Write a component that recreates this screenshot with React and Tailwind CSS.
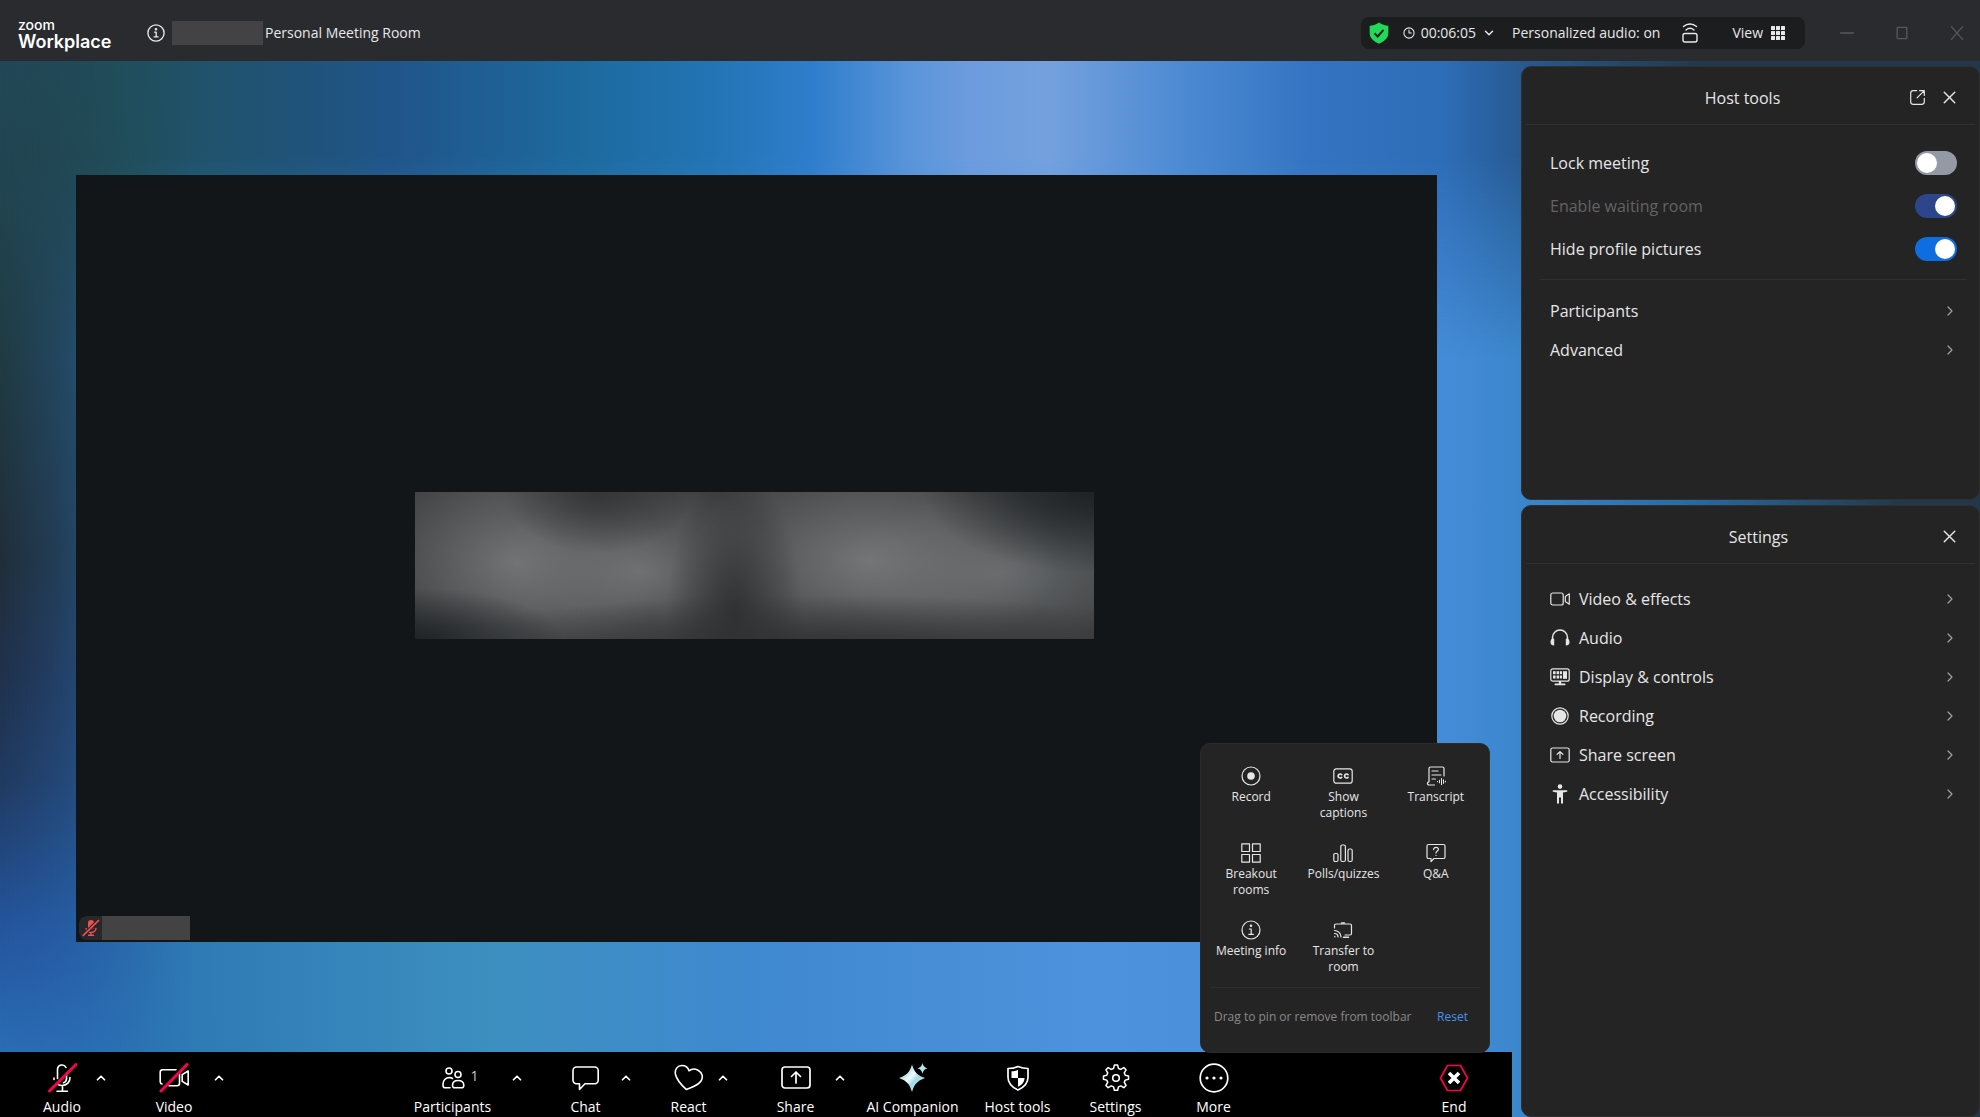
import { useState } from "react";
import { ChevronDown, ChevronRight, ChevronUp, X } from "lucide-react";

/* ---------- icons ---------- */

function Svg({ size = 20, box = 20, className = "", children, sw = 1.2 }) {
  return (
    <svg
      width={size}
      height={size}
      viewBox={`0 0 ${box} ${box}`}
      fill="none"
      stroke="currentColor"
      strokeWidth={sw}
      strokeLinecap="round"
      strokeLinejoin="round"
      aria-hidden="true"
      className={`shrink-0 ${className}`}
    >
      {children}
    </svg>
  );
}

const InfoIcon = ({ size = 18, sw = 1.5 }) => (
  <Svg size={size} sw={sw}>
    <circle cx="10" cy="10" r="9" />
    <circle cx="10" cy="5.8" r="0.7" fill="currentColor" />
    <path d="M8.3 9h1.9v5.2M7.8 14.3h4.6" />
  </Svg>
);

const ShieldCheck = () => (
  <svg width="20" height="22" viewBox="0 0 20 22" aria-hidden="true" className="shrink-0">
    <path d="M10 .5c2.6 2 5.6 3 9.3 3.2V11c0 4.8-3.7 8.5-9.3 10.700C4.400 19.500.7 15.800.7 11V3.700C4.400 3.500 7.400 2.500 10 .5z" fill="#23d959" />
    <path d="M5.500 11.300l3.200 3.200 5.800-6.600" fill="none" stroke="#1c1d1f" strokeWidth="2" />
  </svg>
);

const ClockIcon = () => (
  <Svg size={12} sw={1.8}>
    <circle cx="10" cy="10" r="8.500" />
    <path d="M10 5v5h4" />
  </Svg>
);

const CastIcon = () => (
  <Svg size={20} sw={1.4}>
    <rect x="3" y="10.500" width="14" height="8.500" rx="2" />
    <path d="M3.500 3.600c3.800-3.400 9.200-3.400 13 0M6 7c2.400-2 5.600-2 8 0" />
  </Svg>
);

const GridIcon = () => (
  <svg width="14" height="14" viewBox="0 0 14 14" fill="currentColor" aria-hidden="true" className="shrink-0">
    {[0, 5, 10].map((y) => [0, 5, 10].map((x) => <rect key={`${x}-${y}`} x={x} y={y} width="4" height="4" rx="0.5" />))}
  </svg>
);

const PopOutIcon = () => (
  <Svg size={17} sw={1.4}>
    <path d="M9 2H5a3 3 0 0 0-3 3v10a3 3 0 0 0 3 3h10a3 3 0 0 0 3-3v-4M12.500 2H18v5.500M18 2l-8.500 8.500" />
  </Svg>
);

const VideoSmall = () => (
  <Svg>
    <rect x=".8" y="4" width="12.400" height="12" rx="2" />
    <path d="M19.300 4.800v10.400l-4-2.600V7.400z" />
  </Svg>
);

const HeadphonesIcon = () => (
  <Svg>
    <path d="M2.500 13V9.500a7.500 7.500 0 0 1 15 0V13" strokeWidth="1.500" />
    <path d="M2.800 10.500c-1.600.4-2.300 2-2.300 3.600 0 2 .9 3.400 3.700 3.400v-6.200c0-.6-.6-1-1.400-.8zM17.200 10.500c1.600.4 2.300 2 2.300 3.600 0 2-.9 3.400-3.700 3.400v-6.200c0-.6.600-1 1.400-.8z" fill="currentColor" stroke="none" />
  </Svg>
);

const DisplayIcon = () => (
  <Svg>
    <rect x=".8" y="1.800" width="18.400" height="12.400" rx="2" />
    <g fill="currentColor" stroke="none">
      <rect x="3" y="4.200" width="2.600" height="3" />
      <rect x="6.600" y="4.200" width="2.600" height="3" />
      <rect x="10" y="4.200" width="2" height="3" />
      <rect x="3" y="8.500" width="2.600" height="3" />
      <rect x="6.600" y="8.500" width="2.600" height="3" />
      <rect x="10" y="8.500" width="2" height="3" />
      <rect x="13" y="4.200" width="4" height="7.600" />
      <rect x="8.800" y="14" width="2.400" height="3" />
      <rect x="4.500" y="16.500" width="11" height="1.700" rx=".8" />
    </g>
  </Svg>
);

const RecordingIcon = () => (
  <Svg>
    <circle cx="10" cy="10" r="8.200" />
    <circle cx="10" cy="10" r="6.300" fill="currentColor" stroke="none" />
  </Svg>
);

const ShareSmall = () => (
  <Svg>
    <rect x=".8" y="3" width="18.400" height="14" rx="1.800" />
    <path d="M10 13.500V7M7.200 9.300L10 6.600l2.800 2.700" />
  </Svg>
);

const AccessIcon = () => (
  <Svg>
    <g fill="currentColor" stroke="none">
      <circle cx="10" cy="2.600" r="2.300" />
      <path d="M2.800 6.200h14.400v1.500l-4.200.9v10.900h-2v-6h-2v6H7V8.600l-4.200-.9z" />
    </g>
  </Svg>
);

const RecordIcon = () => (
  <Svg>
    <circle cx="10" cy="10" r="9" />
    <circle cx="10" cy="10" r="3.800" fill="currentColor" stroke="none" />
  </Svg>
);

const CaptionIcon = () => (
  <Svg>
    <rect x=".8" y="2.800" width="18.400" height="14.400" rx="2.500" />
    <path d="M8.600 8.600a2 2 0 1 0 0 2.800M15 8.600a2 2 0 1 0 0 2.800" strokeWidth="1.700" />
  </Svg>
);

const TranscriptIcon = () => (
  <Svg>
    <path d="M8.500 19H3a1.700 1.700 0 0 1-1.500-2c.2-.9 1-1.200 1.500-1.200V2.500A1.500 1.500 0 0 1 4.500 1h12A1.500 1.500 0 0 1 18 2.500V10M6 5h6M6 9h9M6 13h3.500" />
    <path d="M11.500 15.400v.4M13.500 14.300v2.600M15.500 12.500v6.200M17.500 13.800v3.600M19.400 15.200v.8" strokeWidth="1" />
  </Svg>
);

const BreakoutIcon = () => (
  <Svg sw={1.2}>
    <path d="M.8.8h7.700v7.700H.8zM11.500.8h7.700v7.700h-7.700zM.8 11.500h7.700v7.700H.8zM11.500 11.500h7.700v7.700h-7.700z" />
  </Svg>
);

const PollsIcon = () => (
  <Svg>
    <rect x=".8" y="10.500" width="4.200" height="8" rx="1.200" />
    <rect x="7.800" y="2" width="4.600" height="16.500" rx="1.500" />
    <rect x="15" y="6" width="4.200" height="12.500" rx="1.500" />
  </Svg>
);

const QaIcon = () => (
  <Svg>
    <path d="M2.500 1.500h15A1.500 1.500 0 0 1 19 3v11a1.500 1.500 0 0 1-1.500 1.500H8L5 18.600v-3.100H2.500A1.500 1.500 0 0 1 1 14V3a1.500 1.500 0 0 1 1.500-1.500z" />
    <path d="M7.600 6.600C7.600 5.200 8.600 4.400 10 4.400s2.400.8 2.400 2c0 1.700-2.400 1.700-2.400 3.700M10 12.400v.1" />
  </Svg>
);

const TransferIcon = () => (
  <Svg>
    <path d="M1.500 8V5.500A1.500 1.500 0 0 1 3 4h14a1.500 1.500 0 0 1 1.500 1.500v8A1.500 1.500 0 0 1 17 15h-5" />
    <path d="M8.500 3h3M10.500 17.300h5" strokeWidth="1.500" />
    <path d="M1.500 10.500a6.500 6.500 0 0 1 6.500 6.500M1.500 13.500a3.500 3.500 0 0 1 3.500 3.500M1.700 16.500l.3.300" />
  </Svg>
);

/* toolbar icons share a 30px box */

const MicOff = () => (
  <Svg size={30} box={30} sw={1.6}>
    <path d="M10.500 15.500V6a4.500 4.500 0 0 1 8.500-1.500M19.500 10v5.500a4.500 4.500 0 0 1-3 4.300" />
    <path d="M7 15v1.500M23 14.500c.2 4.500-3.200 8-8 8-1.500 0-2.800-.3-4-.9M15.500 22.500V28M10 28.300h10.500" />
    <path d="M2.500 28L29 1.500" stroke="#fb0050" strokeWidth="3" />
  </Svg>
);

const VideoOff = () => (
  <Svg size={30} box={30} sw={1.6}>
    <path d="M3 21c-1.200-.3-1.800-1-1.800-2.300V9.300C1.200 7.600 2 6.800 3.700 6.800H17M20.500 10.500v9.800c0 1.700-.8 2.500-2.500 2.500h-8M29.200 8v14l-6-3.600v-6.800z" />
    <path d="M2 28L28 1.500" stroke="#fb0050" strokeWidth="3" />
  </Svg>
);

const PeopleIcon = () => (
  <Svg size={24} box={24} sw={1.6}>
    <circle cx="8" cy="5" r="3" />
    <circle cx="17" cy="8.500" r="3" />
    <path d="M11.500 12.500A6 6 0 0 0 8.500 11.500c-4 0-6.500 3-6.500 6.500v1.500c0 1.500.8 2.300 2.300 2.300H9" />
    <path d="M17 14.500c-3.600 0-5.500 2.200-5.500 5 0 1.500.8 2.300 2.300 2.300h6.700c1.500 0 2.300-.8 2.300-2.300 0-2.800-2-5-5.800-5z" />
  </Svg>
);

const ChatIcon = () => (
  <Svg size={30} box={30} sw={1.6}>
    <path d="M5.500 4h18.200a3.500 3.500 0 0 1 3.500 3.500v9.800a3.500 3.500 0 0 1-3.500 3.500H14L8.500 26.500v-5.700h-3A3.500 3.500 0 0 1 2 17.300V7.500A3.500 3.500 0 0 1 5.500 4z" />
  </Svg>
);

const HeartIcon = () => (
  <Svg size={30} box={30} sw={1.6}>
    <path d="M12.300 26.500C8 22.500 3 18 1.500 11.500.4 6.500 3.500 2.500 7.800 2.500c3.600 0 6.400 2.200 7.200 5.300 2.500-2 6-2.200 9-.6 4.300 2.300 5.500 7 3 10.800-3.200 4.800-9.500 6.300-14.700 8.500z" />
  </Svg>
);

const ShareIcon = () => (
  <Svg size={30} box={30} sw={1.7}>
    <rect x="1" y="4" width="28" height="21" rx="3" />
    <path d="M15 20V9.500M10.500 13.500L15 9l4.500 4.500" />
  </Svg>
);

const SparkIcon = () => (
  <svg width="30" height="30" viewBox="0 0 30 30" aria-hidden="true" className="shrink-0">
    <defs>
      <linearGradient id="spark" x1="0" y1="0" x2="1" y2="1">
        <stop offset="0" stopColor="#4fa7b8" />
        <stop offset=".45" stopColor="#f2fdff" />
        <stop offset=".6" stopColor="#9fdbe6" />
        <stop offset="1" stopColor="#e6fbff" />
      </linearGradient>
    </defs>
    <path d="M14 1.500c2.500 8 5 10.500 13 13.500-8 3-10.500 6-13 14-2.500-8-5-11-13-14 8-3 10.500-5.500 13-13.500z" fill="url(#spark)" />
    <path d="M24.500 0c1 3.400 1.900 4.200 5 5.300-3.100 1.100-4 2.100-5 5.500-1-3.400-1.900-4.400-5-5.500 3.100-1.100 4-1.900 5-5.300z" fill="#b9e4ec" />
  </svg>
);

const HostShield = () => (
  <Svg size={26} box={26} sw={1.7}>
    <path d="M13 1.500c3 1.300 6.300 2 10 2v8.700c0 6-4 10-10 12.800C7 22.200 3 18.200 3 12.200V3.500c3.700 0 7-.7 10-2z" />
    <path d="M13 5v8H6.500V6.300C9 6.200 11 5.800 13 5zM13 13h6.500c0 4-2.500 6.800-6.500 8.800z" fill="currentColor" stroke="none" />
  </Svg>
);

const GearIcon = () => (
  <Svg size={28} box={28} sw={1.6}>
    <path d="M12.300 1.800h3.400l.9 3.500 2.400 1 3.200-1.900 2.400 2.400-1.900 3.200 1 2.400 3.500.9v3.400l-3.500.9-1 2.400 1.900 3.200-2.400 2.400-3.200-1.900-2.400 1-.9 3.500h-3.400l-.9-3.500-2.400-1-3.200 1.900-2.400-2.400L5.300 20l-1-2.400-3.500-.9v-3.400l3.500-.9 1-2.400-1.900-3.200 2.400-2.400L9 6.300l2.400-1z" transform="translate(.7 -.6) scale(.95)" />
    <circle cx="14" cy="14" r="3.300" />
  </Svg>
);

const MoreIcon = () => (
  <Svg size={30} box={30} sw={1.7}>
    <circle cx="15" cy="15" r="13.800" />
    <g fill="currentColor" stroke="none">
      <circle cx="8" cy="15" r="1.600" />
      <circle cx="15" cy="15" r="1.600" />
      <circle cx="22" cy="15" r="1.600" />
    </g>
  </Svg>
);

const EndIcon = () => (
  <Svg size={30} box={30}>
    <path d="M8.500 2.500h13l7 12.500-7 12.500h-13L1.500 15z" stroke="#fb0050" strokeWidth="1.700" />
    <path d="M10 10l10 10M20 10l-10 10" strokeWidth="3.600" strokeLinecap="butt" />
  </Svg>
);

const ChipMic = () => (
  <svg width="18" height="18" viewBox="0 0 18 18" fill="none" stroke="#f0504f" aria-hidden="true">
    <rect x="6" y="1" width="6" height="9.500" rx="3" fill="#f0504f" stroke="none" />
    <path d="M4 9c.2 3 2 4.500 5 4.500s4.800-1.500 5-4.500M9 13.500V16M6 16.300h6" strokeWidth="1.400" />
    <path d="M.8 16.800L17 1" stroke="#26282b" strokeWidth="3.600" />
    <path d="M.8 16.800L17 1" strokeWidth="1.700" />
  </svg>
);

/* ---------- data ---------- */

const settingsRows = [
  { label: "Video & effects", icon: VideoSmall },
  { label: "Audio", icon: HeadphonesIcon },
  { label: "Display & controls", icon: DisplayIcon },
  { label: "Recording", icon: RecordingIcon },
  { label: "Share screen", icon: ShareSmall },
  { label: "Accessibility", icon: AccessIcon },
];

const moreItems = [
  { label: "Record", icon: RecordIcon },
  { label: "Show captions", icon: CaptionIcon },
  { label: "Transcript", icon: TranscriptIcon },
  { label: "Breakout rooms", icon: BreakoutIcon },
  { label: "Polls/quizzes", icon: PollsIcon },
  { label: "Q&A", icon: QaIcon },
  { label: "Meeting info", icon: () => <InfoIcon size={20} sw={1.2} /> },
  { label: "Transfer to room", icon: TransferIcon },
];

/* ---------- header ---------- */

function Header() {
  return (
    <header className="flex h-[61px] shrink-0 items-center bg-[#2a2b2e] pt-1 pl-[18px] text-[14px] text-[#e8e8e8]">
      <div className="w-[129px] pt-1 font-['Inter',sans-serif] text-white">
        <p className="text-[14px] leading-[14px] font-medium">zoom</p>
        <p className="text-[18px] leading-5 font-semibold">Workplace</p>
      </div>
      <button aria-label="Meeting information" className="flex">
        <InfoIcon />
      </button>
      <span className="ml-[7px] h-6 w-[91px] bg-[#434345]" />
      <h1 className="ml-[2px]">Personal Meeting Room</h1>

      <div className="ml-auto flex h-8 items-center rounded-lg bg-[#1c1d1f] pr-5 pl-2">
        <ShieldCheck />
        <button className="ml-[14px] flex items-center gap-[6px]">
          <ClockIcon />
          <span>00:06:05</span>
          <ChevronDown size={14} strokeWidth={2.5} />
        </button>
        <button className="ml-4">Personalized audio: on</button>
        <button aria-label="Wireless share" className="ml-5 flex">
          <CastIcon />
        </button>
        <button className="ml-8 flex items-center gap-2">
          View
          <GridIcon />
        </button>
      </div>

      <div className="ml-[34px] flex items-center gap-[39px] pr-[15px] text-[#59595b]">
        <button aria-label="Minimize">
          <Svg size={16} sw={1.6}><path d="M2 10h16" /></Svg>
        </button>
        <button aria-label="Maximize">
          <Svg size={16} sw={1.6}><rect x="4" y="3" width="12" height="14" rx="1" /></Svg>
        </button>
        <button aria-label="Close window">
          <Svg size={16} sw={1.6}><path d="M3 2l14 16M17 2L3 18" /></Svg>
        </button>
      </div>
    </header>
  );
}

/* ---------- side panels ---------- */

function PanelHeader({ title, popOut }) {
  return (
    <div className="mx-1 flex h-[58px] shrink-0 items-center border-b border-[#303030] pt-1 pr-[10px] pl-[58px]">
      <h2 className="flex-1 text-center">{title}</h2>
      {popOut && (
        <button aria-label="Pop out" className="flex w-8 justify-center">
          <PopOutIcon />
        </button>
      )}
      <button aria-label={`Close ${title}`} className="flex w-8 justify-center">
        <X size={21} strokeWidth={1.6} />
      </button>
    </div>
  );
}

function ToggleRow({ id, label, checked, onChange, disabled }) {
  return (
    <div className="flex h-[43px] items-center justify-between">
      <label htmlFor={id} className={disabled ? "text-[#636363]" : ""}>{label}</label>
      <input
        id={id}
        type="checkbox"
        role="switch"
        checked={checked}
        disabled={disabled}
        onChange={(e) => onChange(e.target.checked)}
        className="flex h-6 w-[42px] appearance-none items-center rounded-full bg-[#939aa5] px-[2px] before:size-5 before:rounded-full before:bg-white checked:justify-end checked:bg-[#0e6ee0] disabled:bg-[#2d468b]"
      />
    </div>
  );
}

function LinkRow({ label, icon: Icon }) {
  return (
    <button className="flex h-[39px] w-full items-center gap-[9px] text-left">
      {Icon && <Icon />}
      <span className="flex-1">{label}</span>
      <ChevronRight size={16} strokeWidth={1.8} className="text-[#a0a0a0]" />
    </button>
  );
}

function SidePanels() {
  const [lock, setLock] = useState(false);
  const [hide, setHide] = useState(true);

  return (
    <aside className="flex w-[459px] shrink-0 flex-col gap-[5px] pt-[5px] text-[16px] text-[#e6e6e6]">
      <section className="flex flex-[434_1_0%] flex-col rounded-[10px] border border-[#303030] bg-[#242424]">
        <PanelHeader title="Host tools" popOut />
        <div className="pt-4 pr-[22px] pl-7">
          <ToggleRow id="lock" label="Lock meeting" checked={lock} onChange={setLock} />
          <ToggleRow id="waiting" label="Enable waiting room" checked disabled onChange={() => {}} />
          <ToggleRow id="hide" label="Hide profile pictures" checked={hide} onChange={setHide} />
        </div>
        <hr className="mt-[9px] mr-3 mb-[11px] ml-[18px] border-[#303030]" />
        <div className="pr-[21px] pl-7">
          <LinkRow label="Participants" />
          <LinkRow label="Advanced" />
        </div>
      </section>

      <section className="flex flex-[612_1_0%] flex-col rounded-[10px] border border-[#303030] bg-[#242424]">
        <PanelHeader title="Settings" />
        <div className="pt-[15px] pr-[21px] pl-7">
          {settingsRows.map((row) => (
            <LinkRow key={row.label} {...row} />
          ))}
        </div>
      </section>
    </aside>
  );
}

/* ---------- stage ---------- */

function VideoTile() {
  return (
    <div className="relative flex aspect-[71/40] w-full items-center justify-center bg-[#121619] pt-[14px] pr-1">
      <div className="h-[147px] w-1/2 bg-[#3e4042] bg-[radial-gradient(ellipse_14%_42%_at_27%_0%,#333537,transparent),radial-gradient(ellipse_10%_100%_at_47%_85%,#2f3133,transparent),radial-gradient(ellipse_25%_55%_at_100%_0%,#1f2224,transparent),radial-gradient(ellipse_22%_35%_at_0%_100%,#202326,transparent),radial-gradient(ellipse_60%_35%_at_60%_105%,#303234,transparent),radial-gradient(ellipse_22%_75%_at_15%_48%,#727375,transparent),radial-gradient(ellipse_22%_60%_at_33%_54%,#6e7072,transparent),radial-gradient(ellipse_28%_75%_at_67%_47%,#747577,transparent),radial-gradient(ellipse_24%_55%_at_86%_55%,#65686a,transparent)]" />
      <div className="absolute bottom-[2px] left-[3px] flex h-6 items-stretch">
        <span className="flex w-[23px] items-center justify-center rounded-l-lg bg-[#26282b]">
          <ChipMic />
        </span>
        <span className="w-[88px] bg-[#434343]" />
      </div>
    </div>
  );
}

function MoreMenu() {
  return (
    <div className="absolute right-[22px] bottom-16 w-[290px] rounded-[10px] border border-[#2c2c2c] bg-[#242424] text-[12px] leading-4 text-[#e6e6e6]">
      <div className="grid grid-cols-3 gap-y-[10px] pt-[22px] pr-[7px] pl-1">
        {moreItems.map(({ label, icon: Icon }) => (
          <button key={label} className="flex h-[67px] flex-col items-center gap-[3px] px-1">
            <Icon />
            <span className={label.includes(" ") && label !== "Meeting info" ? "px-2" : ""}>{label}</span>
          </button>
        ))}
      </div>
      <div className="mx-[9px] flex h-[65px] items-center justify-between border-t border-[#2e2e2e] pr-3 pb-[6px] pl-1">
        <span className="text-[#8a8a8a]">Drag to pin or remove from toolbar</span>
        <button className="text-[#4a90e8]">Reset</button>
      </div>
    </div>
  );
}

function Tool({ label, icon: Icon, width, menu, count }) {
  return (
    <div className="flex">
      <button className={`flex flex-col items-center ${width}`}>
        <span className="relative flex h-8 items-center">
          <Icon />
          {count && <span className="absolute top-1 left-[30px] text-[14px] leading-5 font-normal text-[#c8c8c8]">{count}</span>}
        </span>
        <span className="mt-[3px] leading-5 whitespace-nowrap">{label}</span>
      </button>
      {menu && (
        <button aria-label={`${label} options`} className="flex h-8 w-6 items-center justify-center">
          <ChevronUp size={14} strokeWidth={3} />
        </button>
      )}
    </div>
  );
}

function Toolbar() {
  return (
    <nav className="flex h-[65px] shrink-0 justify-between bg-black pt-[10px] pr-9 pl-[35px] text-[14px] font-medium text-white">
      <div className="flex gap-7">
        <Tool label="Audio" icon={MicOff} width="w-[54px]" menu />
        <Tool label="Video" icon={VideoOff} width="w-[66px]" menu />
      </div>
      <div className="flex gap-[5px]">
        <div className="flex gap-[29px]">
          <Tool label="Participants" icon={PeopleIcon} width="w-[104px]" menu count="1" />
          <Tool label="Chat" icon={ChatIcon} width="w-14" menu />
          <Tool label="React" icon={HeartIcon} width="w-11" menu />
          <Tool label="Share" icon={ShareIcon} width="w-16" menu />
        </div>
        <div className="flex">
          <Tool label="AI Companion" icon={SparkIcon} width="w-28" />
          <Tool label="Host tools" icon={HostShield} width="w-[98px]" />
          <Tool label="Settings" icon={GearIcon} width="w-[98px]" />
          <Tool label="More" icon={MoreIcon} width="w-[98px]" />
        </div>
      </div>
      <Tool label="End" icon={EndIcon} width="w-11" />
    </nav>
  );
}

/* blue wallpaper: bottom colours first, then the top band and both dark edges fade over them */
function Wallpaper() {
  return (
    <div aria-hidden="true" className="absolute inset-0 -z-10 bg-[linear-gradient(to_right,#2a62b0,#2d78b4_8%,#3d8fc0_25%,#3f89d0_38%,#4d92dc_55%,#458cd8_73%,#3a86cc_77%,#2668a0_86%,#22384a_96%)]">
      <div className="absolute inset-0 bg-[linear-gradient(to_right,#22454f,#20525f_6%,#205378_15%,#20558a_20%,#1d6ba0_30%,#2374b4_36%,#2e7dcc_41%,#5a95da_46%,#6c9cde_49%,#74a1de_53%,#4b89d2_60%,#3474c2_66%,#2d6cb6_73%,#27598f_77%,#22384a_86%)] [mask-image:linear-gradient(to_bottom,black_14%,transparent_32%)]" />
      <div className="absolute inset-y-0 left-0 w-48 bg-[linear-gradient(to_bottom,#22495a,#21444f_18%,#203a42_32%,#202e38_50%,#20304a_60%,#203a60_70%,#24559c_83%,#2a6cb4_94%)] [mask-image:linear-gradient(to_right,black,rgb(0_0_0/0.75)_30%,transparent)]" />
    </div>
  );
}

export default function App() {
  return (
    <div className="relative isolate flex h-screen flex-col overflow-hidden font-['Open_Sans','Noto_Sans',sans-serif]">
      <Wallpaper />
      <Header />
      <div className="flex min-h-0 flex-1 gap-[9px]">
        <main className="relative flex min-w-0 flex-1 flex-col">
          <div className="flex min-h-0 flex-1 items-center pt-1 pr-[75px] pl-[76px]">
            <VideoTile />
          </div>
          <Toolbar />
          <MoreMenu />
        </main>
        <SidePanels />
      </div>
    </div>
  );
}
